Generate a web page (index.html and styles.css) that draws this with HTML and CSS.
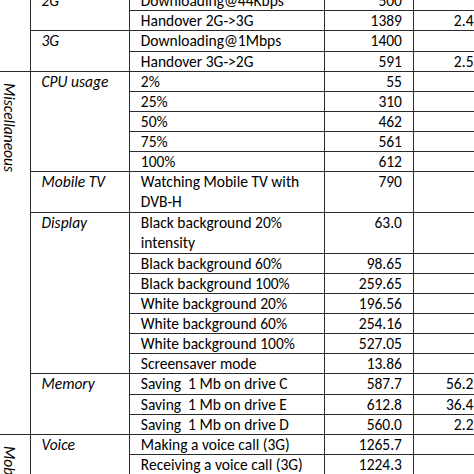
FILE: index.html
```html
<!DOCTYPE html>
<html>
<head>
<meta charset="utf-8">
<link rel="stylesheet" href="styles.css">
</head>
<body>
<table class="t">
<colgroup><col class="c1"><col class="c2"><col class="c3"><col class="c4"><col class="c5"></colgroup>
<tbody>
<tr><td class="grp" rowspan="4"></td><td class="cat" rowspan="2">2G</td><td>Downloading@44Kbps</td><td class="num">500</td><td class="num"></td></tr>
<tr><td>Handover 2G-&gt;3G</td><td class="num">1389</td><td class="num">2.4</td></tr>
<tr><td class="cat" rowspan="2">3G</td><td>Downloading@1Mbps</td><td class="num">1400</td><td class="num"></td></tr>
<tr><td>Handover 3G-&gt;2G</td><td class="num">591</td><td class="num">2.5</td></tr>
<tr><td class="grp" rowspan="16"><div class="vlabel">Miscellaneous</div></td><td class="cat" rowspan="5">CPU usage</td><td>2%</td><td class="num">55</td><td class="num"></td></tr>
<tr><td>25%</td><td class="num">310</td><td class="num"></td></tr>
<tr><td>50%</td><td class="num">462</td><td class="num"></td></tr>
<tr><td>75%</td><td class="num">561</td><td class="num"></td></tr>
<tr><td>100%</td><td class="num">612</td><td class="num"></td></tr>
<tr class="tall"><td class="cat">Mobile TV</td><td class="two">Watching Mobile TV with DVB-H</td><td class="num">790</td><td class="num"></td></tr>
<tr class="tall"><td class="cat" rowspan="7">Display</td><td class="two">Black background 20% intensity</td><td class="num">63.0</td><td class="num"></td></tr>
<tr><td>Black background 60%</td><td class="num">98.65</td><td class="num"></td></tr>
<tr><td>Black background 100%</td><td class="num">259.65</td><td class="num"></td></tr>
<tr><td>White background 20%</td><td class="num">196.56</td><td class="num"></td></tr>
<tr><td>White background 60%</td><td class="num">254.16</td><td class="num"></td></tr>
<tr><td>White background 100%</td><td class="num">527.05</td><td class="num"></td></tr>
<tr><td>Screensaver mode</td><td class="num">13.86</td><td class="num"></td></tr>
<tr><td class="cat" rowspan="3">Memory</td><td>Saving&nbsp; 1 Mb on drive C</td><td class="num">587.7</td><td class="num">56.2</td></tr>
<tr><td>Saving&nbsp; 1 Mb on drive E</td><td class="num">612.8</td><td class="num">36.4</td></tr>
<tr><td>Saving&nbsp; 1 Mb on drive D</td><td class="num">560.0</td><td class="num">2.2</td></tr>
<tr><td class="grp" rowspan="2"><div class="vlabel cut">Mobile</div></td><td class="cat" rowspan="2">Voice</td><td>Making a voice call (3G)</td><td class="num">1265.7</td><td class="num"></td></tr>
<tr><td>Receiving a voice call (3G)</td><td class="num">1224.3</td><td class="num"></td></tr>
</tbody>
</table>
</body>
</html>
```
FILE: styles.css
```css
html, body {
  margin: 0;
  padding: 0;
  background: #fff;
  overflow: hidden;
}
.t {
  border-collapse: collapse;
  table-layout: fixed;
  width: 495.5px;
  margin-left: -11px;
  margin-top: -9.7px;
  font-family: "Carlito", "Lato", sans-serif;
  font-size: 15.5px;
  line-height: 19px;
  color: #000;
}
.c1 { width: 40.5px; }
.c2 { width: 99.3px; }
.c3 { width: 195.2px; }
.c4 { width: 89px; }
.c5 { width: 71.5px; }
tr { height: 20.09px; }
tr.tall { height: 40.18px; }
td {
  border: 1px solid #2b2b2b;
  padding: 0 11px;
  vertical-align: top;
  white-space: nowrap;
  overflow: hidden;
}
td.two { white-space: normal; line-height: 20px; }
td.cat { font-style: italic; }
td.num { text-align: right; }
td.grp { padding: 0; overflow: visible; }
.vlabel {
  writing-mode: vertical-rl;
  font-style: italic;
  white-space: nowrap;
  margin-left: 10px;
  padding-top: 11px;
}
.vlabel.cut {
  height: 20px;
  overflow: visible;
}
```
